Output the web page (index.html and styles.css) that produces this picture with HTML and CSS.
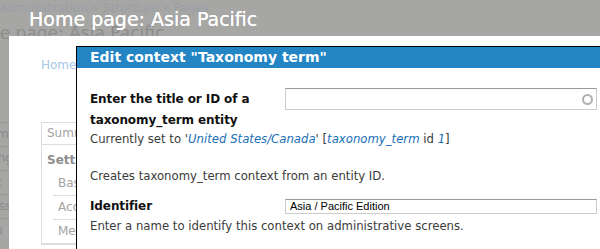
FILE: index.html
```html
<!DOCTYPE html>
<html>
<head>
<meta charset="utf-8">
<link rel="stylesheet" href="styles.css">
</head>
<body>
<div class="page">
  <div class="ghost-crumb">Administration » Structure » Pages</div>
  <div class="ghost-title">Home page: Asia Pacific</div>
  <ul class="ghost-tabs">
    <li>Summary</li>
    <li>Settings</li>
    <li>Basic</li>
    <li>Access</li>
    <li>Menu</li>
  </ul>
  <h1 class="title">Home page: Asia Pacific</h1>
  <div class="panel">
    <div class="home">Home</div>
    <ul class="tabs">
      <li class="tab">Summary</li>
      <li class="tab tab-group">Settings</li>
      <li class="tab tab-sub">Basic</li>
      <li class="tab tab-sub">Access</li>
      <li class="tab tab-sub">Menu</li>
    </ul>
  </div>
</div>
<div class="modal">
  <div class="modal-head">Edit context "Taxonomy term"</div>
  <div class="modal-body">
    <div class="field">
      <div class="field-row">
        <label class="label">Enter the title or ID of a taxonomy_term entity</label>
        <div class="input input-auto"><span class="throbber"></span></div>
      </div>
      <div class="desc">Currently set to '<a class="link">United States/Canada</a>' [<a class="link">taxonomy_term</a> id <a class="link">1</a>]</div>
    </div>
    <div class="desc desc-block">Creates taxonomy_term context from an entity ID.</div>
    <div class="field">
      <div class="field-row field-row-id">
        <label class="label">Identifier</label>
        <div class="input input-id">Asia / Pacific Edition</div>
      </div>
      <div class="desc">Enter a name to identify this context on administrative screens.</div>
    </div>
  </div>
</div>
</body>
</html>
```
FILE: styles.css
```css
html, body {
  margin: 0;
  padding: 0;
  width: 600px;
  height: 249px;
  overflow: hidden;
}
body {
  background: #a6a6a5;
  font-family: "DejaVu Sans", Verdana, sans-serif;
  position: relative;
}
.page {
  position: relative;
  height: 249px;
}
.ghost-crumb {
  position: absolute;
  left: 0;
  top: 1px;
  font-size: 12px;
  color: #9a9fa6;
  white-space: nowrap;
}
.ghost-title {
  position: absolute;
  left: -40px;
  top: 23px;
  font-size: 17px;
  color: #8d8d8c;
  white-space: nowrap;
}
.ghost-tabs {
  position: absolute;
  left: -30px;
  top: 122px;
  margin: 0;
  padding: 0;
  list-style: none;
  width: 39px;
  font-size: 12px;
  color: #8b8b8a;
}
.ghost-tabs li {
  height: 23px;
  line-height: 23px;
  border-top: 1px solid #999;
  white-space: nowrap;
}
.title {
  position: relative;
  margin: 0;
  height: 36px;
  padding-left: 29px;
  font-size: 19px;
  font-weight: normal;
  line-height: 38px;
  color: #fff;
  white-space: nowrap;
  text-shadow: 0 0 0.4px #fff;
}
.panel {
  position: relative;
  margin-left: 9px;
  height: 213px;
  background: #fff;
  padding-left: 32px;
  padding-top: 22px;
  box-sizing: border-box;
}
.home {
  font-size: 12px;
  color: #a6c6e8;
  height: 64px;
}
.tabs {
  margin: 0;
  padding: 0;
  list-style: none;
  width: 80px;
  border: 1px solid #ddd;
  border-right: none;
  font-size: 12px;
  color: #a3a3a3;
}
.tab {
  height: 21px;
  line-height: 20px;
  padding-left: 5px;
  border-bottom: 1px solid #ddd;
  white-space: nowrap;
  overflow: hidden;
}
.tab-group {
  font-weight: bold;
  color: #8e8e8e;
  height: 27px;
  line-height: 30px;
  border-bottom: none;
}
.tab-sub {
  margin-left: 11px;
  height: 23px;
  line-height: 22px;
}
.tab-sub:last-child {
  margin-left: 0;
  padding-left: 16px;
}
.modal {
  position: absolute;
  left: 76px;
  top: 46px;
  width: 560px;
  height: 240px;
  background: #fff;
  border: 1px solid #000;
}
.modal-head {
  height: 21px;
  background: #2385c3;
  color: #fff;
  font-weight: bold;
  font-size: 14px;
  line-height: 21px;
  padding-left: 13px;
  white-space: nowrap;
}
.modal-body {
  padding: 21px 0 0 13px;
  color: #3b3b3b;
  font-size: 11.7px;
}
.field-row {
  display: flex;
  align-items: flex-start;
}
.label {
  display: block;
  width: 195px;
  font-weight: bold;
  font-size: 12px;
  letter-spacing: -0.1px;
  line-height: 21px;
  color: #111;
}
.input {
  box-sizing: border-box;
  width: 312px;
  border: 1px solid #ccc;
  border-top-color: #999;
  background: #fff;
}
.input-auto {
  height: 22px;
  margin-top: -1px;
  position: relative;
}
.throbber {
  position: absolute;
  right: 3px;
  top: 5px;
  width: 7px;
  height: 7px;
  border: 2px solid #b0b0b0;
  border-radius: 50%;
}
.desc {
  line-height: 16px;
  white-space: nowrap;
}
.link {
  color: #1a6fb6;
  font-style: italic;
}
.desc-block {
  margin-top: 21px;
}
.field-row-id {
  margin-top: 12px;
  align-items: center;
}
.input-id {
  height: 15px;
  font-family: "Liberation Sans", Arial, sans-serif;
  font-size: 11px;
  line-height: 13px;
  padding-left: 4px;
  color: #000;
}
.field-row-id + .desc {
  margin-top: 1px;
}
```
